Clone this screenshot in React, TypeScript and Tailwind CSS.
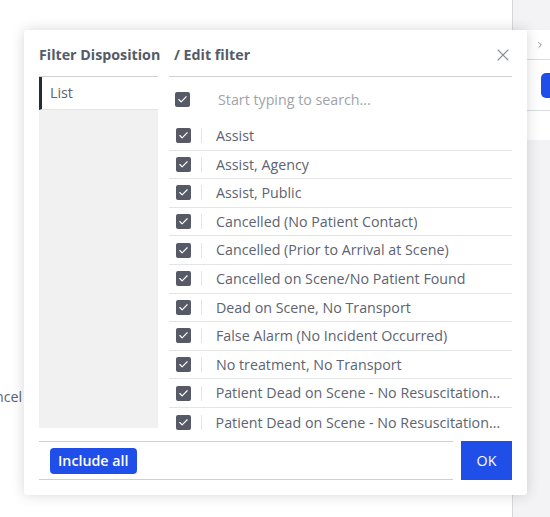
import { Check, X, ChevronRight } from 'lucide-react';

const items = [
  'Assist',
  'Assist, Agency',
  'Assist, Public',
  'Cancelled (No Patient Contact)',
  'Cancelled (Prior to Arrival at Scene)',
  'Cancelled on Scene/No Patient Found',
  'Dead on Scene, No Transport',
  'False Alarm (No Incident Occurred)',
  'No treatment, No Transport',
  'Patient Dead on Scene - No Resuscitation Attempted (With Transport)',
  'Patient Dead on Scene - No Resuscitation Attempted (Without Transport)',
];

function CheckBox() {
  return (
    <span className="flex h-[15px] w-[15px] shrink-0 items-center justify-center rounded-[2px] bg-[#555a66]">
      <Check className="h-[11px] w-[11px] text-white" strokeWidth={2.5} />
    </span>
  );
}

export default function App() {
  return (
    <div className="relative flex h-[517px] w-full overflow-hidden bg-white font-['Open_Sans','Noto_Sans',sans-serif] text-[14.25px]">
      {/* page behind the modal */}
      <div className="flex-1">
        <div className="mt-[386px] -ml-[22px] text-[#5d6370]">Cancel</div>
      </div>
      <div className="flex w-[38px] flex-col border-l border-[#d6d7db]">
        <div className="h-[30px] bg-[#f3f3f5]" />
        <div className="flex h-[110px] flex-col bg-white">
          <div className="flex h-[30px] items-center justify-end border-b border-[#dcdde0] pr-[5px]">
            <ChevronRight className="h-[10px] w-[10px] text-[#6b7080]" />
          </div>
          <div className="flex h-[51px] items-center justify-end border-b border-[#dcdde0]">
            <div className="h-[25px] w-[9px] rounded-l-[5px] bg-[#1f4fe8]" />
          </div>
        </div>
        <div className="flex-1 bg-[#f3f3f5]" />
      </div>

      {/* modal */}
      <div className="absolute left-[24px] top-[30px] flex h-[465px] w-[503px] flex-col rounded-[3px] bg-white px-[15px] pb-[15px] shadow-[0_0_14px_rgba(0,0,0,0.16)]">
        <div className="flex h-[46px] items-center pt-[3px]">
          <div className="w-[130px] whitespace-nowrap font-bold text-[#555b68]">Filter Disposition</div>
          <div className="flex-1 pl-[5px] font-bold text-[#555b68]">/ Edit filter</div>
          <X className="mr-[-1px] h-[20px] w-[20px] text-[#8c9098]" strokeWidth={1.3} />
        </div>
        <div className="flex gap-[11px]">
          <div className="flex h-[352px] w-[119px] flex-col border-t border-[#cfd0d4]">
            <div className="flex h-[33px] items-center border-b border-[#e3e4e6] border-l-[3px] border-l-[#262b36] pl-[8px] text-[#5d6370]">
              List
            </div>
            <div className="flex-1 bg-[#f1f1f1]" />
          </div>
          <div className="flex h-[356px] flex-1 flex-col overflow-hidden border-t border-[#cfd0d4]">
            <div className="flex h-[45px] shrink-0 items-center pl-[6px]">
              <CheckBox />
              <span className="ml-[28px] text-[#a0a3aa]">Start typing to search...</span>
            </div>
            {items.map((item) => (
              <div
                key={item}
                className="flex h-[28.6px] shrink-0 items-center border-b border-[#e3e4e6] pl-[7px] last:border-b-0"
              >
                <CheckBox />
                <span className="ml-[10px] h-[15px] w-px bg-[#e3e4e6]" />
                <span className="ml-[14px] truncate pr-[10px] text-[#5d6370]">{item}</span>
              </div>
            ))}
          </div>
        </div>
        <div className="mt-[9px] flex h-[39px] gap-[8px]">
          <div className="flex flex-1 items-center border-y border-[#cfd0d4] pl-[11px]">
            <button className="h-[26px] rounded-[4px] bg-[#1f4fe8] px-[8px] font-semibold text-white">
              Include all
            </button>
          </div>
          <button className="h-[39px] w-[51px] bg-[#1f4fe8] text-white">OK</button>
        </div>
      </div>
    </div>
  );
}
